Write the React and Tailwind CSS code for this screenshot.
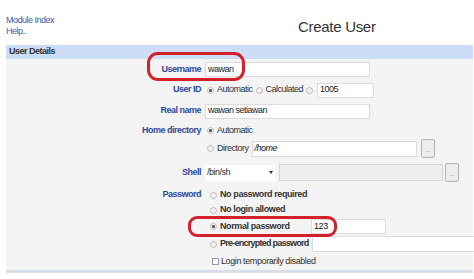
import React from 'react';

const Radio = ({ checked }) => (
  <span className="inline-flex w-[7px] h-[7px] shrink-0 items-center justify-center rounded-full border border-[#b8b8b8] bg-[#f2f2f2]">
    {checked && <span className="w-[3px] h-[3px] rounded-full bg-[#4a4a4a]"></span>}
  </span>
);

const Label = ({ children }) => (
  <div className="flex items-center justify-end font-bold text-[#2b4aa0]">{children}</div>
);

const TextBox = ({ value, className = '' }) => (
  <div className={`h-[15px] shrink-0 flex items-center bg-white border border-[#dcdcdc] pl-[2px] text-[#222] ${className}`}>
    {value}
  </div>
);

const DotsButton = () => (
  <div className="w-[14px] h-[19px] flex items-end justify-center pb-[4px] rounded-[2px] border border-[#b4b4b4] bg-[#ececec] text-[7px] leading-none text-[#999]">
    ...
  </div>
);

export default function App() {
  return (
    <div className="relative w-[474px] h-[279px] overflow-hidden bg-white text-[9px] tracking-[-0.5px] whitespace-nowrap text-[#333]" style={{ fontFamily: '"Liberation Sans", Arial, sans-serif' }}>

      {/* Top links + title */}
      <div className="flex h-[45px]">
        <div className="pl-[6px] pt-[15px] flex flex-col leading-[11px] text-[#3d5ca6]">
          <span>Module Index</span>
          <span>Help..</span>
        </div>
        <div className="ml-[244px] pt-[16px] text-[15px] tracking-[-0.3px] text-[#333]">Create User</div>
      </div>

      {/* Panel */}
      <div className="ml-[6px] w-[467px] border-b-[3px] border-[#d9dde6]">
        <div className="h-[14px] flex items-center pl-[3px] bg-[#cddcf8] font-bold text-[#333]">User Details</div>
        <div className="bg-[#f4f4f4] pt-[1px] grid grid-cols-[195px_1fr] gap-x-[4px] text-[#333]">

          {/* Username */}
          <Label><div className="h-[19px] flex items-center">Username</div></Label>
          <div className="h-[19px] flex items-center">
            <TextBox value="wawan" className="w-[165px]" />
          </div>

          {/* User ID */}
          <Label><div className="h-[22px] flex items-center">User ID</div></Label>
          <div className="h-[22px] flex items-center gap-[3px] pl-[2px]">
            <Radio checked />
            <span>Automatic</span>
            <Radio />
            <span>Calculated</span>
            <Radio />
            <TextBox value="1005" className="w-[57px] ml-[1px]" />
          </div>

          {/* Real name */}
          <Label><div className="h-[20px] flex items-center">Real name</div></Label>
          <div className="h-[20px] flex items-center">
            <TextBox value="wawan setiawan" className="w-[165px]" />
          </div>

          {/* Home directory */}
          <div className="flex justify-end font-bold text-[#2b4aa0]">
            <div className="h-[19px] flex items-center">Home directory</div>
          </div>
          <div className="flex flex-col">
            <div className="h-[19px] flex items-center gap-[3px] pl-[2px]">
              <Radio checked />
              <span>Automatic</span>
            </div>
            <div className="h-[17px] flex items-center gap-[3px] pl-[2px]">
              <Radio />
              <span>Directory</span>
              <TextBox value={<i>/home</i>} className="w-[165px] h-[16px]" />
              <div className="ml-[1px]"><DotsButton /></div>
            </div>
          </div>

          {/* Shell */}
          <Label><div className="h-[27px] flex items-center pt-[4px]">Shell</div></Label>
          <div className="h-[27px] flex items-center pt-[4px]">
            <div className="w-[71px] h-[16px] flex items-center justify-between pl-[2px] pr-[3px] bg-white">
              <span>/bin/sh</span>
              <span className="w-0 h-0 border-l-[2.5px] border-r-[2.5px] border-t-[3px] border-l-transparent border-r-transparent border-t-[#333]"></span>
            </div>
            <div className="ml-[3px] w-[164px] h-[17px] bg-[#eeeeee] border border-[#d6d6d6]"></div>
            <div className="ml-[2px]"><DotsButton /></div>
          </div>

          {/* Password */}
          <div className="flex justify-end font-bold text-[#2b4aa0]">
            <div className="h-[18px] flex items-center pt-[4px]">Password</div>
          </div>
          <div className="flex flex-col pl-[5px] font-bold tracking-[-0.4px]">
            <div className="h-[18px] flex items-center gap-[3px] pt-[4px]">
              <Radio />
              <span>No password required</span>
            </div>
            <div className="h-[16px] flex items-center gap-[3px]">
              <Radio />
              <span>No login allowed</span>
            </div>
            <div className="h-[17px] flex items-center gap-[3px]">
              <Radio checked />
              <span className="w-[88px]">Normal password</span>
              <TextBox value={<span className="font-normal">123</span>} className="w-[75px]" />
            </div>
            <div className="h-[18px] flex items-center gap-[3px]">
              <Radio />
              <span className="min-w-[89px] tracking-[-0.75px]">Pre-encrypted password</span>
              <TextBox value="" className="w-[170px] h-[16px]" />
            </div>
            <div className="h-[17px] flex items-center gap-[2px] pl-[2px] font-normal">
              <span className="w-[7px] h-[7px] border border-[#9a9a9a] bg-white"></span>
              <span>Login temporarily disabled</span>
            </div>
          </div>
        </div>
      </div>

      {/* Red annotation marks */}
      <div className="absolute left-[147px] top-[52px] w-[98px] h-[29px] rounded-[11px] border-[3px] border-[#d3202b]"></div>
      <div className="absolute left-[188px] top-[216px] w-[149px] h-[21px] rounded-[9px] border-[3px] border-[#d3202b]"></div>
    </div>
  );
}
